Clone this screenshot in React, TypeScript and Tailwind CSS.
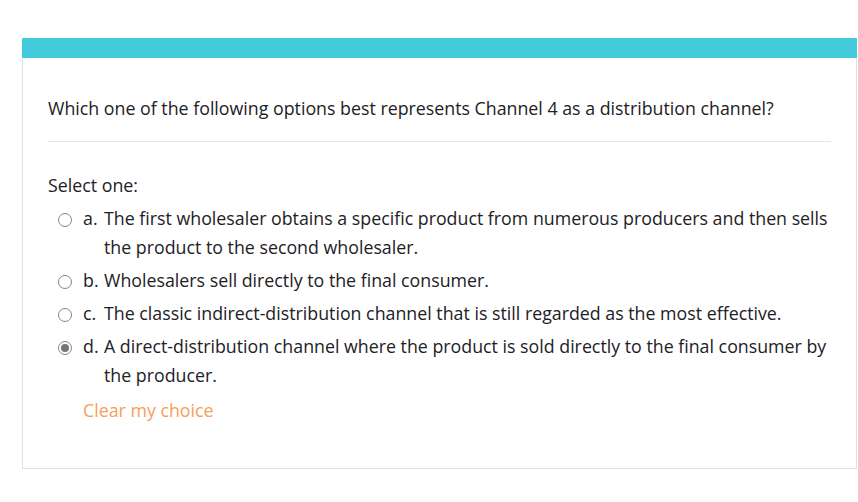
import React from "react";

const options = [
  { n: "a.", t: "The first wholesaler obtains a specific product from numerous producers and then sells the product to the second wholesaler.", checked: false },
  { n: "b.", t: "Wholesalers sell directly to the final consumer.", checked: false },
  { n: "c.", t: "The classic indirect-distribution channel that is still regarded as the most effective.", checked: false },
  { n: "d.", t: "A direct-distribution channel where the product is sold directly to the final consumer by the producer.", checked: true },
];

function Radio({ checked }: { checked: boolean }) {
  return (
    <span className="mt-[9px] flex h-[14px] w-[14px] shrink-0 items-center justify-center rounded-full border-[1.5px] border-[#858585] bg-white">
      {checked && <span className="h-[8px] w-[8px] rounded-full bg-[#767676]" />}
    </span>
  );
}

export default function App() {
  return (
    <div
      className="min-h-[502px] w-[858px] bg-white pl-[22px] pr-[1px] pt-[38px] text-[#1d2125]"
      style={{ fontFamily: '"Open Sans", "Noto Sans", sans-serif' }}
    >
      <div className="w-[835px]">
        <div className="h-[20px] bg-[#41cbdb]" />
        <div className="border-x border-b border-[#dee2e6] px-[25px] pb-[43px] pt-[36px] text-[17.8px] leading-[29px]">
          <div>Which one of the following options best represents Channel 4 as a distribution channel?</div>
          <div className="mt-[18px] border-t border-[#e6e6e6]" />
          <div className="mt-[29px]">Select one:</div>
          <div className="mt-[4px] flex flex-col gap-[4px]">
            {options.map((o) => (
              <div key={o.n} className="flex pl-[10px]">
                <Radio checked={o.checked} />
                <span className="ml-[11px] w-[21px] shrink-0">{o.n}</span>
                <span>{o.t}</span>
              </div>
            ))}
          </div>
          <div className="mt-[6px] pl-[35px] text-[#f5a05a]">Clear my choice</div>
        </div>
      </div>
    </div>
  );
}
